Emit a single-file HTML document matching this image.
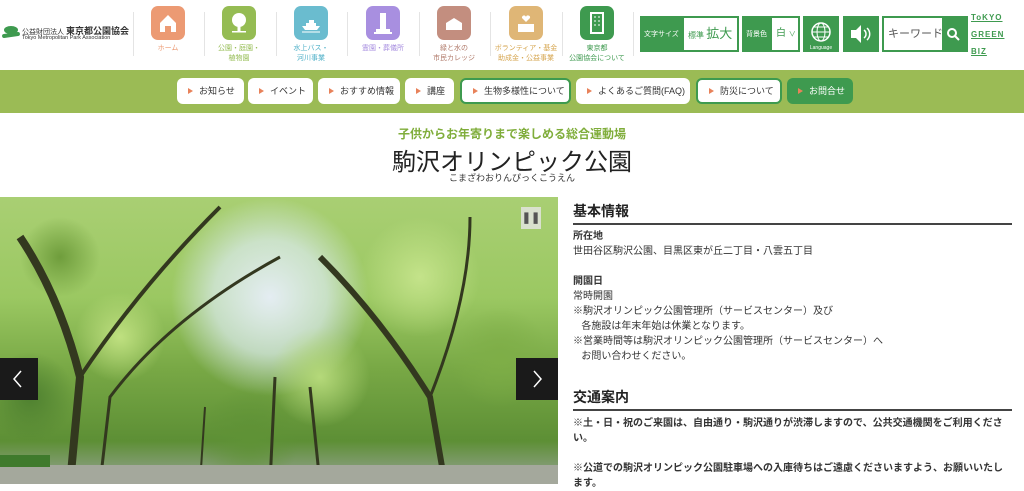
<!DOCTYPE html>
<html><head><meta charset="utf-8"><style>
*{margin:0;padding:0;box-sizing:border-box}
body{width:1024px;height:484px;overflow:hidden;background:#fff;font-family:"Liberation Sans","Noto Sans CJK JP",sans-serif;color:#333;position:relative}
.a{position:absolute}
.ic{position:absolute;top:6px;width:34px;height:34px;border-radius:7px}
.lb{position:absolute;top:44px;width:72px;text-align:center;font-size:7px;line-height:10px}
.sep{position:absolute;top:12px;width:1px;height:44px;background:#e4e4e4}
.btn{position:absolute;top:78px;height:26px;background:#fff;border-radius:6px;font-size:9px;line-height:26px;padding-left:22px;color:#333}
.btn:before{content:"";position:absolute;left:11px;top:10px;border-left:5px solid #e8825a;border-top:3px solid transparent;border-bottom:3px solid transparent}
.bd{border:2px solid #3e9a4f;line-height:22px}
.bd:before{top:8px}
.gb{background:#3e9a4f;color:#fff}
.t{font-size:10px;line-height:15px;color:#333}
h2{position:absolute;left:573px;width:439px;font-size:14px;font-weight:bold;border-bottom:2px solid #444;padding-bottom:2px;color:#222}
</style></head><body>
<div class="a" style="left:4px;top:26px;width:14px;height:8px;background:#3e9a4f;border-radius:50%"></div>
<div class="a" style="left:2px;top:33px;width:18px;height:4px;background:#3e9a4f;border-radius:3px;transform:rotate(-8deg)"></div>
<div class="a" style="left:22px;top:24px;font-size:7px;color:#333;white-space:nowrap">公益財団法人 <b style="font-size:9px">東京都公園協会</b></div>
<div class="a" style="left:22px;top:35px;font-size:5.5px;color:#333;white-space:nowrap">Tokyo Metropolitan Park Association</div>
<div class="sep" style="left:133px"></div><div class="sep" style="left:204px"></div><div class="sep" style="left:276px"></div><div class="sep" style="left:347px"></div><div class="sep" style="left:419px"></div><div class="sep" style="left:490px"></div><div class="sep" style="left:562px"></div><div class="sep" style="left:633px"></div>
<div class="ic" style="left:151px;background:#ec9a73"><svg width="34" height="34"><path d="M9 17 L17 9 L25 17 V26 H20 V20 H14 V26 H9Z" fill="#fff"/></svg></div>
<div class="ic" style="left:222px;background:#95bc53"><svg width="34" height="34"><circle cx="17" cy="14" r="7" fill="#fff"/><rect x="15.5" y="18" width="3" height="7" fill="#fff"/><rect x="10" y="25" width="14" height="1.5" fill="#fff"/></svg></div>
<div class="ic" style="left:294px;background:#6abccf"><svg width="34" height="34"><path d="M8 20 H26 L23 24 H11Z M12 17 H22 V20 H12Z M15 14 H20 V17 H15Z" fill="#fff"/><path d="M8 26 H26" stroke="#fff"/></svg></div>
<div class="ic" style="left:366px;background:#a88fe0"><svg width="34" height="34"><rect x="14" y="7" width="6" height="16" fill="#fff"/><rect x="10" y="23" width="14" height="3" fill="#fff"/><rect x="8" y="26" width="18" height="2" fill="#fff"/></svg></div>
<div class="ic" style="left:437px;background:#c38e7f"><svg width="34" height="34"><path d="M9 17 L17 12 L25 17 V24 H9Z" fill="#fff"/></svg></div>
<div class="ic" style="left:509px;background:#dfb676"><svg width="34" height="34"><rect x="9" y="18" width="16" height="8" fill="#fff"/><path d="M17 16 l-4-4 a2 2 0 0 1 4-1 a2 2 0 0 1 4 1z" fill="#fff"/></svg></div>
<div class="ic" style="left:580px;background:#3e9a4f"><svg width="34" height="34"><rect x="11" y="7" width="12" height="20" fill="none" stroke="#fff" stroke-width="2"/><path d="M14 11h2M18 11h2M14 15h2M18 15h2M14 19h2M18 19h2" stroke="#fff"/></svg></div>
<div class="lb" style="left:132px;color:#ec9a73">ホーム</div>
<div class="lb" style="left:203px;color:#95bc53">公園・庭園・<br>植物園</div>
<div class="lb" style="left:275px;color:#4fb0c8">水上バス・<br>河川事業</div>
<div class="lb" style="left:347px;color:#a88fe0">霊園・葬儀所</div>
<div class="lb" style="left:418px;color:#b07a6a">緑と水の<br>市民カレッジ</div>
<div class="lb" style="left:490px;color:#d6a650">ボランティア・基金<br>助成金・公益事業</div>
<div class="lb" style="left:561px;color:#3e9a4f">東京都<br>公園協会について</div>
<div class="a" style="left:640px;top:16px;width:99px;height:36px;background:#3e9a4f"></div>
<div class="a" style="left:644px;top:29px;font-size:7px;color:#fff">文字サイズ</div>
<div class="a" style="left:684px;top:18px;width:53px;height:32px;background:#fff;font-size:8px;color:#3e9a4f;line-height:32px;padding-left:4px">標準 <span style="font-size:13px">拡大</span></div>
<div class="a" style="left:742px;top:16px;width:58px;height:36px;background:#3e9a4f"></div>
<div class="a" style="left:746px;top:29px;font-size:7px;color:#fff">背景色</div>
<div class="a" style="left:772px;top:18px;width:26px;height:32px;background:#fff;font-size:10px;color:#3e9a4f;line-height:32px;padding-left:4px">白 <span style="font-size:7px">∨</span></div>
<div class="a" style="left:803px;top:16px;width:36px;height:36px;background:#3e9a4f"><svg width="36" height="36"><circle cx="18" cy="16" r="9" fill="none" stroke="#fff" stroke-width="1.5"/><ellipse cx="18" cy="16" rx="4" ry="9" fill="none" stroke="#fff"/><path d="M9 16h18M11 11h14M11 21h14" stroke="#fff"/><text x="18" y="33" font-size="5" fill="#fff" text-anchor="middle" font-family="Liberation Sans">Language</text></svg></div>
<div class="a" style="left:843px;top:16px;width:36px;height:36px;background:#3e9a4f"><svg width="36" height="36"><path d="M8 14h5l5-5v18l-5-5H8z" fill="#fff"/><path d="M21 14a5 5 0 0 1 0 8M24 12a8 8 0 0 1 0 12" stroke="#fff" stroke-width="1.5" fill="none"/></svg></div>
<div class="a" style="left:882px;top:16px;width:86px;height:36px;background:#3e9a4f"></div>
<div class="a" style="left:884px;top:18px;width:58px;height:32px;background:#fff;font-size:11px;color:#555;line-height:32px;padding-left:4px;overflow:hidden;white-space:nowrap">キーワード</div>
<svg class="a" style="left:946px;top:27px" width="14" height="14"><circle cx="6" cy="6" r="4" fill="none" stroke="#fff" stroke-width="2"/><path d="M9 9l4 4" stroke="#fff" stroke-width="2"/></svg>
<div class="a" style="left:971px;top:9px;font-size:8px;line-height:17px;color:#3e9a4f;font-weight:bold;text-decoration:underline;letter-spacing:1px">ToKYO<br>GREEN<br>BIZ</div>
<div class="a" style="left:0;top:70px;width:1024px;height:43px;background:#9bbb55"></div>
<div class="btn" style="left:177px;width:67px">お知らせ</div>
<div class="btn" style="left:248px;width:65px">イベント</div>
<div class="btn" style="left:318px;width:82px">おすすめ情報</div>
<div class="btn" style="left:405px;width:49px">講座</div>
<div class="btn bd" style="left:460px;width:111px">生物多様性について</div>
<div class="btn" style="left:576px;width:114px">よくあるご質問(FAQ)</div>
<div class="btn bd" style="left:696px;width:86px">防災について</div>
<div class="btn gb" style="left:787px;width:66px">お問合せ</div>
<div class="a" style="left:0;width:1024px;top:125px;text-align:center;font-size:12px;font-weight:bold;color:#7fad3a">子供からお年寄りまで楽しめる総合運動場</div>
<div class="a" style="left:0;width:1024px;top:142px;text-align:center;font-size:24px;color:#222">駒沢オリンピック公園</div>
<div class="a" style="left:0;width:1024px;top:171px;text-align:center;font-size:9px;color:#333">こまざわおりんぴっくこうえん</div>
<div class="a" style="left:0;top:197px;width:558px;height:287px;overflow:hidden;background:linear-gradient(180deg,#a9cf73 0%,#9bc862 35%,#78a845 60%,#5d8f35 85%,#9aa49a 100%)">
<div class="a" style="left:170px;top:0;width:200px;height:200px;background:radial-gradient(ellipse,#e4edf2 0%,rgba(220,235,240,0.7) 40%,transparent 70%)"></div>
<div class="a" style="left:0;top:0;width:558px;height:287px;background:
radial-gradient(circle at 60px 60px,#6f9d3c 0,transparent 40px),
radial-gradient(circle at 120px 140px,#bfe080 0,transparent 45px),
radial-gradient(circle at 420px 80px,#c4e38a 0,transparent 60px),
radial-gradient(circle at 500px 160px,#7eae47 0,transparent 50px),
radial-gradient(circle at 320px 180px,#b5d97a 0,transparent 50px),
radial-gradient(circle at 30px 200px,#4f8130 0,transparent 45px),
radial-gradient(circle at 250px 240px,#5f9236 0,transparent 50px)"></div>
<svg class="a" style="left:0;top:0" width="558" height="287"><g stroke="#33381f" fill="none"><path d="M70 287 L80 180 Q60 100 20 40" stroke-width="8"/><path d="M80 180 Q140 90 220 10" stroke-width="4"/><path d="M100 287 L110 200 Q170 120 280 60" stroke-width="3"/><path d="M445 287 L430 200 Q380 120 320 60" stroke-width="6"/><path d="M430 200 Q470 100 470 20" stroke-width="3"/><path d="M270 287 L275 180" stroke-width="3"/><path d="M320 287 L310 190" stroke-width="3"/><path d="M200 287 L205 210" stroke-width="2"/></g><rect x="0" y="268" width="558" height="19" fill="#a4a89c"/><rect x="0" y="258" width="50" height="12" fill="#3f7a2c"/></svg>
</div>
<div class="a" style="left:521px;top:207px;width:20px;height:22px;background:rgba(230,230,230,0.8);font-size:11px;text-align:center;line-height:22px;color:#555;font-weight:bold">❚❚</div>
<div class="a" style="left:0;top:358px;width:38px;height:42px;background:#1a1a1a"><svg width="38" height="42"><path d="M21 13 L14 21 L21 29" stroke="#fff" stroke-width="1.5" fill="none"/></svg></div>
<div class="a" style="left:516px;top:358px;width:42px;height:42px;background:#1a1a1a"><svg width="42" height="42"><path d="M18 13 L25 21 L18 29" stroke="#fff" stroke-width="1.5" fill="none"/></svg></div>
<h2 style="top:201px">基本情報</h2>
<div class="a t" style="left:573px;top:229px"><b>所在地</b><br>世田谷区駒沢公園、目黒区東が丘二丁目・八雲五丁目<br><br><b>開園日</b><br>常時開園<br>※駒沢オリンピック公園管理所（サービスセンター）及び<br>&nbsp;&nbsp;&nbsp;各施設は年末年始は休業となります。<br>※営業時間等は駒沢オリンピック公園管理所（サービスセンター）へ<br>&nbsp;&nbsp;&nbsp;お問い合わせください。</div>
<h2 style="top:387px">交通案内</h2>
<div class="a t" style="left:573px;top:416px;width:438px;font-weight:bold">※土・日・祝のご来園は、自由通り・駒沢通りが渋滞しますので、公共交通機関をご利用ください。<br><br>※公道での駒沢オリンピック公園駐車場への入庫待ちはご遠慮くださいますよう、お願いいたします。</div>
</body></html>
